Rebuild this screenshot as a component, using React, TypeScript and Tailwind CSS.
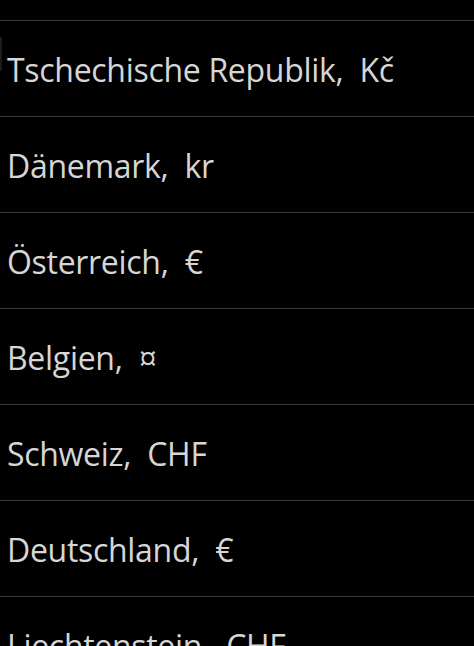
import React from "react";

const items = [
  "Tschechische Republik,\u00a0\u00a0Kč",
  "Dänemark,\u00a0\u00a0kr",
  "Österreich,\u00a0\u00a0€",
  "Belgien,\u00a0\u00a0¤",
  "Schweiz,\u00a0\u00a0CHF",
  "Deutschland,\u00a0\u00a0€",
  "Liechtenstein,\u00a0\u00a0CHF",
];

export default function App() {
  return (
    <div
      className="relative w-[474px] h-[646px] overflow-hidden bg-black"
      style={{ fontFamily: '"Open Sans", "Noto Sans", "DejaVu Sans", sans-serif' }}
    >
      <div className="h-[20px]" />
      {items.map((t) => (
        <div
          key={t}
          className="h-[96px] border-t border-[#3a3a3a] flex items-center pl-[7px] pt-[3px]"
        >
          <span className="text-[32px] leading-none tracking-[-0.3px] text-[#d6d6d6] whitespace-nowrap">{t}</span>
        </div>
      ))}
      <div className="absolute left-0 top-[37px] w-[2px] h-[34px] bg-[#1c1c1c]" />
    </div>
  );
}
